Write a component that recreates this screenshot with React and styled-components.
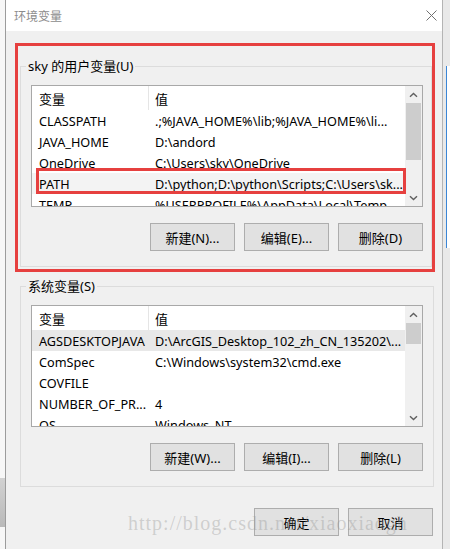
import React from "react";
import styled, { createGlobalStyle } from "styled-components";

const GlobalStyle = createGlobalStyle`
  html, body {
    margin: 0;
    padding: 0;
    background: #f6f6f6;
  }
  body {
    font-family: "Noto Sans", "Noto Sans CJK SC", sans-serif;
    font-size: 13px;
    color: #000;
  }
`;

const userVars = [
  { name: "CLASSPATH", value: ".;%JAVA_HOME%\\lib;%JAVA_HOME%\\li..." },
  { name: "JAVA_HOME", value: "D:\\andord" },
  { name: "OneDrive", value: "C:\\Users\\sky\\OneDrive" },
  { name: "PATH", value: "D:\\python;D:\\python\\Scripts;C:\\Users\\sk...", marked: true },
  { name: "TEMP", value: "%USERPROFILE%\\AppData\\Local\\Temp" },
];

const systemVars = [
  { name: "AGSDESKTOPJAVA", value: "D:\\ArcGIS_Desktop_102_zh_CN_135202\\...", active: true },
  { name: "ComSpec", value: "C:\\Windows\\system32\\cmd.exe" },
  { name: "COVFILE", value: "" },
  { name: "NUMBER_OF_PR...", value: "4" },
  { name: "OS", value: "Windows_NT" },
];

const Chevron = ({ down }) => (
  <svg width="9" height="6" viewBox="0 0 9 6">
    <path
      d={down ? "M1 1.2 L4.5 4.6 L8 1.2" : "M1 4.8 L4.5 1.4 L8 4.8"}
      fill="none"
      stroke="#606060"
      strokeWidth="1.4"
    />
  </svg>
);

const VarList = ({ rows, thumb }) => (
  <ListBox>
    <ListBody>
      <HeaderRow>
        <HeaderName>变量</HeaderName>
        <ValueCell>值</ValueCell>
      </HeaderRow>
      {rows.map((row) => (
        <Row key={row.name} $active={row.active} $soft={row.marked}>
          <NameCell>{row.name}</NameCell>
          <ValueCell>{row.value}</ValueCell>
        </Row>
      ))}
    </ListBody>
    <ScrollBar>
      <ScrollButton>
        <Chevron />
      </ScrollButton>
      <ScrollTrack>
        <Thumb style={{ height: thumb }} />
      </ScrollTrack>
      <ScrollButton>
        <Chevron down />
      </ScrollButton>
    </ScrollBar>
    {rows.some((r) => r.marked) && <RowMark />}
  </ListBox>
);

const VarGroup = ({ title, rows, thumb, keys, width }) => (
  <Group $width={width}>
    <GroupLabel>{title}</GroupLabel>
    <VarList rows={rows} thumb={thumb} />
    <ButtonRow>
      <Button>新建({keys[0]})...</Button>
      <Button>编辑({keys[1]})...</Button>
      <Button>删除({keys[2]})</Button>
    </ButtonRow>
  </Group>
);

const App = () => {
  return (
    <>
      <GlobalStyle />
      <Page>
        <LeftEdge />
        <Dialog>
          <TitleBar>
            <Title>环境变量</Title>
            <svg width="11" height="11" viewBox="0 0 11 11">
              <path d="M0.5 0.5 L10.5 10.5 M10.5 0.5 L0.5 10.5" stroke="#707070" strokeWidth="1" />
            </svg>
          </TitleBar>
          <Body>
            <RedFrame>
              <VarGroup
                title="sky 的用户变量(U)"
                rows={userVars}
                thumb={57}
                keys={["N", "E", "D"]}
                width={412}
              />
            </RedFrame>
            <SystemSpacer />
            <VarGroup
              title="系统变量(S)"
              rows={systemVars}
              thumb={21}
              keys={["W", "I", "L"]}
              width={414}
            />
            <FooterRow>
              <Button>确定</Button>
              <Button>取消</Button>
            </FooterRow>
          </Body>
        </Dialog>
        <RightEdge>
          <BehindWindow />
        </RightEdge>
        <Watermark>http://blog.csdn.net/xiaoxiaogh</Watermark>
      </Page>
    </>
  );
};

const Page = styled.div`
  position: relative;
  display: flex;
  width: 450px;
  height: 549px;
  overflow: hidden;
`;

const LeftEdge = styled.div`
  width: 5px;
  flex-shrink: 0;
  background: linear-gradient(
    to bottom,
    #f7f7f7 0 478px,
    #d2d2d2 478px,
    #b9b9b9 527px,
    #f7f7f7 527px
  );
`;

const RightEdge = styled.div`
  flex: 1;
  background: #e9e9e9;
  padding-top: 66px;
`;

const BehindWindow = styled.div`
  margin-left: 3px;
  height: 182px;
  background: #fff;
  border-left: 1px solid #3b86d6;
`;

const Dialog = styled.div`
  width: 438px;
  flex-shrink: 0;
  box-sizing: border-box;
  border-left: 1px solid #9c9c9c;
  border-right: 1px solid #b4b4b4;
  background: #f0f0f0;
  display: flex;
  flex-direction: column;
`;

const TitleBar = styled.div`
  height: 31px;
  background: #fff;
  display: flex;
  align-items: center;
  justify-content: space-between;
  padding: 0 5px 0 8px;
`;

const Title = styled.div`
  font-size: 12px;
  color: #8c8c8c;
`;

const Body = styled.div`
  padding: 0 8px 0 14px;
`;

const RedFrame = styled.div`
  margin: 12px 0 0 -5px;
  width: 420px;
  box-sizing: border-box;
  border: 3px solid #e6403f;
  padding: 20px 0 2px 2px;
`;

const SystemSpacer = styled.div`
  height: 14px;
`;

const Group = styled.div`
  position: relative;
  width: ${(p) => p.$width}px;
  box-sizing: border-box;
  border: 1px solid #dcdcdc;
  padding: 18px 0 15px 10px;
`;

const GroupLabel = styled.span`
  position: absolute;
  top: -10px;
  left: 5px;
  padding: 0 2px;
  background: #f0f0f0;
  line-height: 18px;
  font-size: 13px;
`;

const ListBox = styled.div`
  position: relative;
  width: 392px;
  height: 122px;
  box-sizing: border-box;
  border: 1px solid #a8a8a8;
  background: #fff;
  display: flex;
  overflow: hidden;
  font-size: 12.7px;
`;

const ListBody = styled.div`
  flex: 1;
  min-width: 0;
  display: flex;
  flex-direction: column;
`;

const HeaderRow = styled.div`
  display: flex;
  height: 24px;
  flex-shrink: 0;
  align-items: stretch;
  font-size: 13px;
`;

const HeaderName = styled.div`
  width: 117px;
  flex-shrink: 0;
  box-sizing: border-box;
  padding-left: 7px;
  border-right: 1px solid #e5e5e5;
  display: flex;
  align-items: center;
`;

const Row = styled.div`
  display: flex;
  height: 21px;
  flex-shrink: 0;
  align-items: center;
  background: ${(p) => (p.$active ? "#e8e8e8" : p.$soft ? "#f3f3f3" : "transparent")};
`;

const NameCell = styled.div`
  width: 117px;
  flex-shrink: 0;
  box-sizing: border-box;
  padding-left: 7px;
  white-space: nowrap;
  overflow: hidden;
`;

const ValueCell = styled.div`
  flex: 1;
  padding-left: 6px;
  white-space: nowrap;
  overflow: hidden;
  display: flex;
  align-items: center;
`;

const ScrollBar = styled.div`
  width: 17px;
  flex-shrink: 0;
  background: #f0f0f0;
  display: flex;
  flex-direction: column;
`;

const ScrollButton = styled.div`
  height: 17px;
  display: flex;
  align-items: center;
  justify-content: center;
`;

const ScrollTrack = styled.div`
  flex: 1;
  display: flex;
  flex-direction: column;
`;

const Thumb = styled.div`
  margin: 0 1px;
  background: #cdcdcd;
`;

const RowMark = styled.div`
  position: absolute;
  top: 82px;
  left: 4px;
  width: 370px;
  height: 26px;
  box-sizing: border-box;
  border: 3px solid #e6403f;
  pointer-events: none;
`;

const ButtonRow = styled.div`
  width: 392px;
  margin-top: 16px;
  display: flex;
  justify-content: flex-end;
  gap: 9px;
`;

const FooterRow = styled.div`
  width: 413px;
  margin-top: 21px;
  display: flex;
  justify-content: flex-end;
  gap: 9px;
`;

const Button = styled.button`
  width: 85px;
  height: 28px;
  padding: 0;
  border: 1px solid #adadad;
  background: #e1e1e1;
  color: #000;
  font-family: inherit;
  font-size: 13px;
`;

const Watermark = styled.div`
  position: absolute;
  left: 128px;
  top: 512px;
  font-family: "Liberation Serif", serif;
  font-size: 20px;
  letter-spacing: 1px;
  color: rgba(150, 150, 150, 0.38);
  white-space: nowrap;
  pointer-events: none;
`;

export default App;
